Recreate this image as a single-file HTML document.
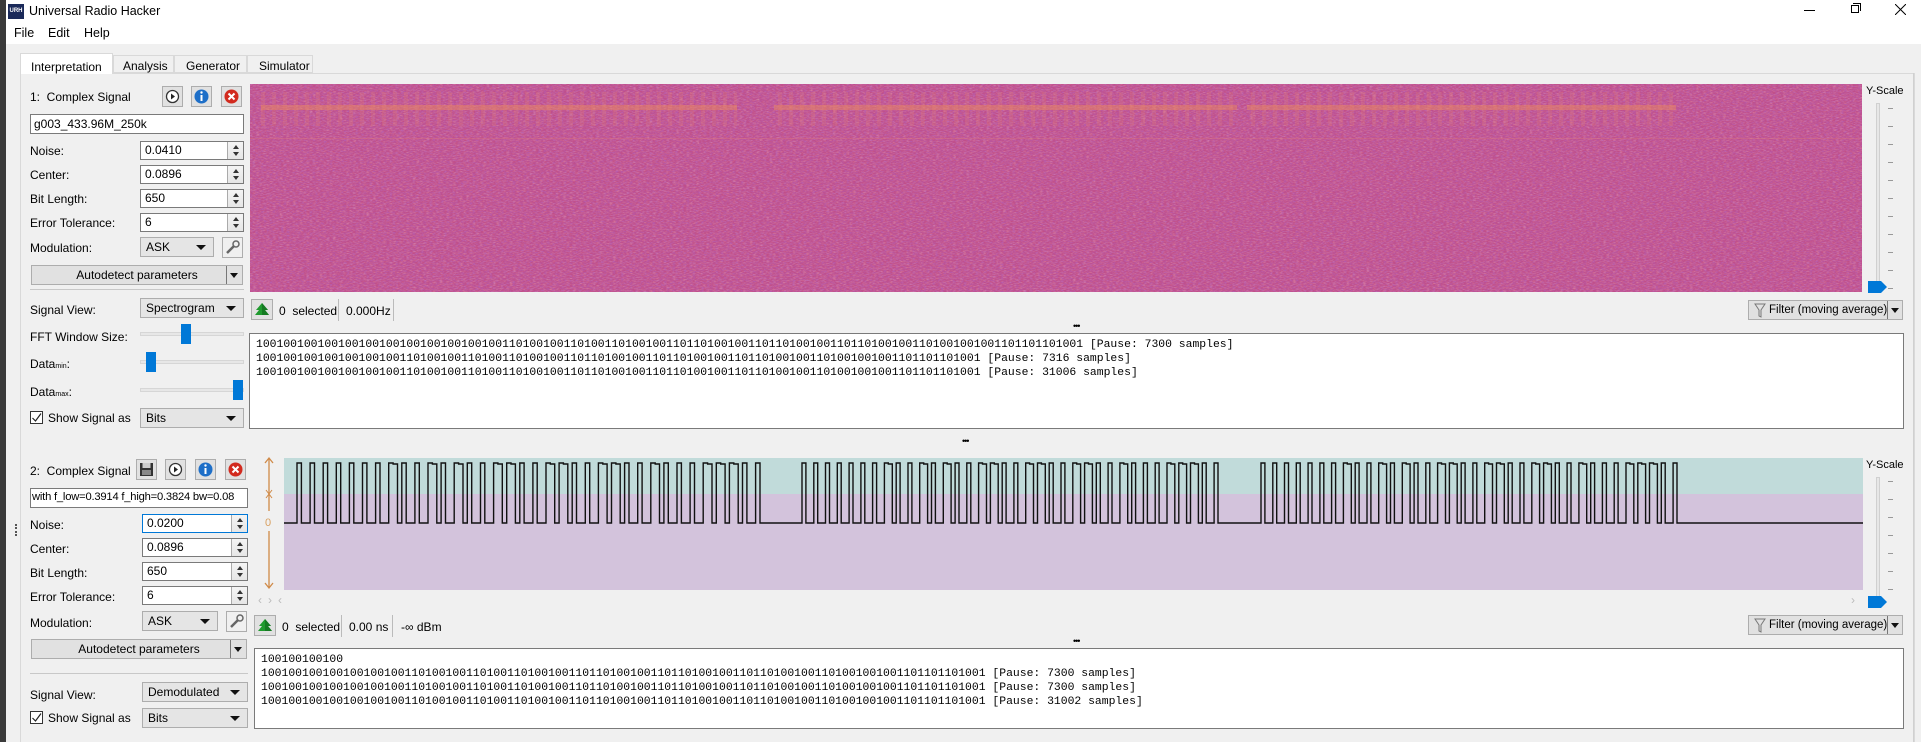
<!DOCTYPE html>
<html><head><meta charset="utf-8">
<style>
*{box-sizing:border-box;margin:0;padding:0}
body{width:1921px;height:742px;overflow:hidden;background:#f0f0f0;font-family:"Liberation Sans",sans-serif;font-size:12px;color:#000;position:relative}
.a{position:absolute}
.lbl{position:absolute;left:30px;font-size:12px;white-space:nowrap}
.spin{position:absolute;height:19px;background:#fff;border:1px solid #7a7a7a;font-size:12px;padding:1px 4px;line-height:15px}
.spin:after{content:"";position:absolute;right:0;top:0;width:15px;height:17px;border-left:1px solid #aaa;background:linear-gradient(#f4f4f4,#e6e6e6)}
.spin i{position:absolute;right:4px;width:0;height:0;border-left:3.5px solid transparent;border-right:3.5px solid transparent;z-index:2}
.spin i.u{top:3px;border-bottom:4px solid #333}
.spin i.d{top:10px;border-top:4px solid #333}
.combo{position:absolute;height:20px;background:#e5e5e5;border:1px solid #adadad;font-size:12px;padding:2px 5px;line-height:14px}
.combo:after{content:"";position:absolute;right:7px;top:7px;border-left:5px solid transparent;border-right:5px solid transparent;border-top:5px solid #111}
.btn{position:absolute;width:21px;height:21px;border:1px solid #adadad;background:#e1e1e1}
.auto{position:absolute;height:20px;background:#e1e1e1;border:1px solid #adadad;text-align:center;line-height:18px;font-size:12px}
.auto b{position:absolute;right:0;top:0;width:16px;height:18px;border-left:1px solid #777}
.auto b:after{content:"";position:absolute;left:3px;top:7px;border-left:4.5px solid transparent;border-right:4.5px solid transparent;border-top:5px solid #111}
.txt{position:absolute;background:#fff;border:1px solid #7a7a7a;font-family:"Liberation Mono",monospace;font-size:11.4px;line-height:14px;padding:4px 0 0 6px;white-space:pre;overflow:hidden}
.sep{position:absolute;height:1px;background:#c8c8c8}
.chk{position:absolute;width:13px;height:13px;border:1px solid #333;background:#fff}
.slider{position:absolute;height:4px;background:#e7e7e7;border:1px solid #d6d6d6}
.handle{position:absolute;width:10px;height:20px;background:#0078d7}
.filter{position:absolute;height:20px;border:1px solid #adadad;background:#e1e1e1;font-size:11.5px;line-height:18px;padding-left:20px;white-space:nowrap;overflow:hidden}
.filter b{position:absolute;right:0;top:0;width:15px;height:18px;border-left:1px solid #777;background:#e1e1e1}
.filter b:after{content:"";position:absolute;left:3px;top:7px;border-left:4.5px solid transparent;border-right:4.5px solid transparent;border-top:5px solid #111}
.ys{position:absolute;font-size:11px}
.vs{position:absolute;width:4px;background:#e7e7e7;border:1px solid #d0d0d0}
.ticks{position:absolute;width:5px;background:repeating-linear-gradient(#fff0 0,#fff0 17px,#999 17px,#999 18px)}
.grn{position:absolute;width:22px;height:21px;border:1px solid #adadad;background:#e1e1e1}
</style></head><body>
<div class="a" style="left:0;top:0;width:1921px;height:44px;background:#fff"></div>
<div class="a" style="left:0;top:0;width:6px;height:742px;background:#3a3a3a"></div>
<div class="a" style="left:8px;top:4px;width:16px;height:15px;background:#1b2a5a;color:#fff;font-size:6px;font-weight:bold;line-height:15px;text-align:center">URH</div>
<div class="a" style="left:29px;top:4px;font-size:12.5px">Universal Radio Hacker</div>
<div class="a" style="left:1804px;top:10px;width:11px;height:1px;background:#000"></div>
<div class="a" style="left:1851px;top:5px;width:8px;height:8px;border:1px solid #000"></div>
<div class="a" style="left:1853px;top:3px;width:8px;height:8px;border-top:1px solid #000;border-right:1px solid #000"></div>
<svg class="a" style="left:1895px;top:4px" width="11" height="11"><path d="M0 0L11 11M11 0L0 11" stroke="#000" stroke-width="1"/></svg>
<div class="a" style="left:14px;top:26px;font-size:12.5px">File</div>
<div class="a" style="left:48px;top:26px;font-size:12.5px">Edit</div>
<div class="a" style="left:84px;top:26px;font-size:12.5px">Help</div>
<div class="a" style="left:20px;top:73px;width:1895px;height:669px;border:1px solid #d9d9d9;border-bottom:none;background:#f0f0f0"></div>
<div class="a" style="left:20px;top:53px;width:93px;height:21px;background:#fff;border:1px solid #d9d9d9;border-bottom:none;padding:6px 0 0 10px">Interpretation</div>
<div class="a" style="left:113px;top:55px;width:61px;height:18px;background:#f0f0f0;border:1px solid #d9d9d9;padding:3px 0 0 9px">Analysis</div>
<div class="a" style="left:174px;top:55px;width:73px;height:18px;background:#f0f0f0;border:1px solid #d9d9d9;padding:3px 0 0 11px">Generator</div>
<div class="a" style="left:247px;top:55px;width:66px;height:18px;background:#f0f0f0;border:1px solid #d9d9d9;padding:3px 0 0 11px">Simulator</div>

<div class="lbl" style="top:90px">1:&nbsp; Complex Signal</div>
<div class="btn" style="left:162px;top:86px"><svg width="19" height="19"><circle cx="9.5" cy="9.5" r="6" fill="#fff" stroke="#333" stroke-width="1.3"/><path d="M8 6.5L12 9.5L8 12.5Z" fill="#222"/></svg></div>
<div class="btn" style="left:191px;top:86px"><svg width="19" height="19"><circle cx="9.5" cy="9.5" r="7" fill="#1e6fc8"/><rect x="8.5" y="8" width="2" height="6" fill="#fff"/><circle cx="9.5" cy="5.5" r="1.2" fill="#fff"/></svg></div>
<div class="btn" style="left:221px;top:86px"><svg width="19" height="19"><circle cx="9.5" cy="9.5" r="7" fill="#d22a1e"/><path d="M6.5 6.5L12.5 12.5M12.5 6.5L6.5 12.5" stroke="#fff" stroke-width="2"/></svg></div>
<div class="a" style="left:30px;top:114px;width:214px;height:20px;background:#fff;border:1px solid #7a7a7a;padding:2px 3px">g003_433.96M_250k</div>
<div class="lbl" style="top:144px">Noise:</div><div class="spin" style="left:140px;top:141px;width:104px">0.0410<i class="u"></i><i class="d"></i></div>
<div class="lbl" style="top:168px">Center:</div><div class="spin" style="left:140px;top:165px;width:104px">0.0896<i class="u"></i><i class="d"></i></div>
<div class="lbl" style="top:192px">Bit Length:</div><div class="spin" style="left:140px;top:189px;width:104px">650<i class="u"></i><i class="d"></i></div>
<div class="lbl" style="top:216px">Error Tolerance:</div><div class="spin" style="left:140px;top:213px;width:104px">6<i class="u"></i><i class="d"></i></div>
<div class="lbl" style="top:241px">Modulation:</div><div class="combo" style="left:140px;top:237px;width:74px">ASK</div>
<div class="btn" style="left:222px;top:237px;background:#f0f0f0"><svg width="19" height="19"><path d="M4 15L11 8" stroke="#666" stroke-width="2.5"/><circle cx="13" cy="6" r="3" fill="none" stroke="#666" stroke-width="1.5"/></svg></div>
<div class="auto" style="left:31px;top:265px;width:212px">Autodetect parameters<b></b></div>
<div class="sep" style="left:30px;top:289px;width:214px"></div>
<div class="lbl" style="top:303px">Signal View:</div><div class="combo" style="left:140px;top:298px;width:104px">Spectrogram</div>
<div class="lbl" style="top:330px">FFT Window Size:</div>
<div class="slider" style="left:140px;top:332px;width:104px"></div><div class="handle" style="left:181px;top:324px"></div>
<div class="lbl" style="top:357px">Data<span style="font-size:7px">min</span>:</div>
<div class="slider" style="left:140px;top:360px;width:104px"></div><div class="handle" style="left:146px;top:352px"></div>
<div class="lbl" style="top:385px">Data<span style="font-size:7px">max</span>:</div>
<div class="slider" style="left:140px;top:388px;width:104px"></div><div class="handle" style="left:233px;top:380px"></div>
<div class="chk" style="left:30px;top:411px"><svg width="11" height="11" style="position:absolute;left:0;top:0"><path d="M1.5 6L4.5 9L10 1.5" fill="none" stroke="#222" stroke-width="1.2"/></svg></div>
<div class="lbl" style="left:48px;top:411px">Show Signal as</div>
<div class="combo" style="left:140px;top:408px;width:104px">Bits</div>

<svg class="a" style="left:250px;top:84px" width="1612" height="208">
<defs>
<filter id="n" x="0" y="0" width="100%" height="100%"><feTurbulence type="fractalNoise" baseFrequency="0.35 1.2" numOctaves="2" seed="3"/><feColorMatrix values="0 0 0 0 0.45  0 0 0 0 0.12  0 0 0 0 0.5  1.8 0 0 0 -0.7"/></filter>
<filter id="n2" x="0" y="0" width="100%" height="100%"><feTurbulence type="fractalNoise" baseFrequency="0.3 1.1" numOctaves="2" seed="9"/><feColorMatrix values="0 0 0 0 0.95  0 0 0 0 0.45  0 0 0 0 0.45  1.6 0 0 0 -0.7"/></filter>
<pattern id="st" width="11" height="40" patternUnits="userSpaceOnUse"><rect width="4" height="40" fill="#e07a78" opacity="0.25"/></pattern>
</defs>
<rect width="1612" height="208" fill="#c04f8a"/>
<rect width="1612" height="208" filter="url(#n)"/>
<rect width="1612" height="208" filter="url(#n2)" opacity="0.6"/>
<rect x="11" y="8" width="476" height="34" fill="url(#st)"/>
<rect x="11" y="21" width="476" height="5" fill="#ea8c5c" opacity="0.45"/>
<rect x="524" y="8" width="463" height="34" fill="url(#st)"/>
<rect x="524" y="21" width="463" height="5" fill="#ea8c5c" opacity="0.45"/>
<rect x="997" y="8" width="429" height="34" fill="url(#st)"/>
<rect x="997" y="21" width="429" height="5" fill="#ea8c5c" opacity="0.45"/>
<rect x="0" y="54" width="1612" height="1" fill="#e07878" opacity="0.35"/>
</svg>
<div class="ys" style="left:1866px;top:85px">Y-Scale</div>
<div class="vs" style="left:1876px;top:103px;height:188px"></div>
<div class="ticks" style="left:1888px;top:91px;height:200px"></div>
<svg class="a" style="left:1868px;top:281px" width="20" height="12"><path d="M0 0H13L19 6L13 12H0Z" fill="#0078d7"/></svg>

<div class="grn" style="left:251px;top:299px"><svg width="20" height="19"><path d="M10 3L16 10H13L17 15H3L7 10H4Z" fill="#1f9a2e"/><path d="M10 3L16 10H13L17 15H10Z" fill="#157a22"/></svg></div>
<div class="a" style="left:279px;top:304px">0&nbsp; selected</div>
<div class="a" style="left:338px;top:299px;width:1px;height:22px;background:#bbb"></div>
<div class="a" style="left:346px;top:304px">0.000Hz</div>
<div class="a" style="left:393px;top:299px;width:1px;height:22px;background:#bbb"></div>
<div class="filter" style="left:1748px;top:300px;width:155px"><svg style="position:absolute;left:5px;top:2px" width="12" height="15"><path d="M1 1H11L7 7V14L5 13V7Z" fill="none" stroke="#777"/></svg>Filter (moving average)<b></b></div>
<div class="a" style="left:1073px;top:321px;font-size:9px;letter-spacing:-1px">•••</div>
<div class="txt" style="left:249px;top:333px;width:1655px;height:96px">1001001001001001001001001001001001001101001001101001101001001101101001001101101001001101101001001101001001001101101101001 [Pause: 7300 samples]
1001001001001001001001101001001101001101001001101101001001101101001001101101001001101001001001101101101001 [Pause: 7316 samples]
1001001001001001001001101001001101001101001001101101001001101101001001101101001001101001001001101101101001 [Pause: 31006 samples]</div>
<div class="a" style="left:962px;top:436px;font-size:9px;letter-spacing:-1px">•••</div>
<div class="a" style="left:15px;top:524px;width:2px;height:12px;border-left:2px dotted #555"></div>

<div class="lbl" style="top:464px">2:&nbsp; Complex Signal</div>
<div class="btn" style="left:136px;top:459px"><svg width="19" height="19"><rect x="3" y="3" width="13" height="13" fill="#333"/><rect x="5.5" y="3" width="8" height="5" fill="#ccc"/><rect x="5" y="10" width="9" height="5" fill="#888"/></svg></div>
<div class="btn" style="left:165px;top:459px"><svg width="19" height="19"><circle cx="9.5" cy="9.5" r="6" fill="#fff" stroke="#333" stroke-width="1.3"/><path d="M8 6.5L12 9.5L8 12.5Z" fill="#222"/></svg></div>
<div class="btn" style="left:195px;top:459px"><svg width="19" height="19"><circle cx="9.5" cy="9.5" r="7" fill="#1e6fc8"/><rect x="8.5" y="8" width="2" height="6" fill="#fff"/><circle cx="9.5" cy="5.5" r="1.2" fill="#fff"/></svg></div>
<div class="btn" style="left:225px;top:459px"><svg width="19" height="19"><circle cx="9.5" cy="9.5" r="7" fill="#d22a1e"/><path d="M6.5 6.5L12.5 12.5M12.5 6.5L6.5 12.5" stroke="#fff" stroke-width="2"/></svg></div>
<div class="a" style="left:30px;top:488px;width:218px;height:20px;background:#fff;border:1px solid #7a7a7a;padding:2px 1px;overflow:hidden;white-space:nowrap;font-size:11.2px;letter-spacing:-0.2px">with f_low=0.3914 f_high=0.3824 bw=0.08</div>
<div class="lbl" style="top:518px">Noise:</div><div class="spin" style="left:142px;top:514px;width:106px;border-color:#0078d7">0.0200<i class="u"></i><i class="d"></i></div>
<div class="lbl" style="top:542px">Center:</div><div class="spin" style="left:142px;top:538px;width:106px">0.0896<i class="u"></i><i class="d"></i></div>
<div class="lbl" style="top:566px">Bit Length:</div><div class="spin" style="left:142px;top:562px;width:106px">650<i class="u"></i><i class="d"></i></div>
<div class="lbl" style="top:590px">Error Tolerance:</div><div class="spin" style="left:142px;top:586px;width:106px">6<i class="u"></i><i class="d"></i></div>
<div class="lbl" style="top:616px">Modulation:</div><div class="combo" style="left:142px;top:611px;width:76px">ASK</div>
<div class="btn" style="left:226px;top:611px;background:#f0f0f0"><svg width="19" height="19"><path d="M4 15L11 8" stroke="#666" stroke-width="2.5"/><circle cx="13" cy="6" r="3" fill="none" stroke="#666" stroke-width="1.5"/></svg></div>
<div class="auto" style="left:31px;top:639px;width:216px">Autodetect parameters<b></b></div>
<div class="sep" style="left:30px;top:673px;width:218px"></div>
<div class="lbl" style="top:688px">Signal View:</div><div class="combo" style="left:142px;top:682px;width:106px">Demodulated</div>
<div class="chk" style="left:30px;top:711px"><svg width="11" height="11" style="position:absolute;left:0;top:0"><path d="M1.5 6L4.5 9L10 1.5" fill="none" stroke="#222" stroke-width="1.2"/></svg></div>
<div class="lbl" style="left:48px;top:711px">Show Signal as</div>
<div class="combo" style="left:142px;top:708px;width:106px">Bits</div>

<svg class="a" style="left:262px;top:456px" width="20" height="136"><path d="M7 3V55M7 75V131" stroke="#d08a48" stroke-width="1.3"/><path d="M3 7L7 2L11 7M3 127L7 132L11 127" fill="none" stroke="#d08a48" stroke-width="1.3"/><path d="M4 34L10 42M10 34L4 42" stroke="#d08a48"/><text x="3" y="70" font-size="11" fill="#d8a060" font-family="Liberation Sans">0</text></svg>
<svg class="a" style="left:284px;top:458px" width="1579" height="132">
<rect width="1579" height="36" fill="#c1dbda"/>
<rect y="36" width="1579" height="96" fill="#d3c3dc"/>
<path id="wp" d="" fill="none" stroke="#111" stroke-width="1.4"/>
</svg>
<div class="a" style="left:258px;top:593px;color:#bbb;font-size:12px;letter-spacing:6px">‹›‹</div>
<div class="a" style="left:1851px;top:593px;color:#bbb;font-size:12px">›</div>
<div class="ys" style="left:1866px;top:459px">Y-Scale</div>
<div class="vs" style="left:1876px;top:477px;height:122px"></div>
<div class="ticks" style="left:1888px;top:464px;height:135px"></div>
<svg class="a" style="left:1868px;top:596px" width="20" height="12"><path d="M0 0H13L19 6L13 12H0Z" fill="#0078d7"/></svg>

<div class="grn" style="left:254px;top:615px"><svg width="20" height="19"><path d="M10 3L16 10H13L17 15H3L7 10H4Z" fill="#1f9a2e"/><path d="M10 3L16 10H13L17 15H10Z" fill="#157a22"/></svg></div>
<div class="a" style="left:282px;top:620px">0&nbsp; selected</div>
<div class="a" style="left:341px;top:615px;width:1px;height:22px;background:#bbb"></div>
<div class="a" style="left:349px;top:620px">0.00 ns</div>
<div class="a" style="left:392px;top:615px;width:1px;height:22px;background:#bbb"></div>
<div class="a" style="left:401px;top:620px">-∞ dBm</div>
<div class="filter" style="left:1748px;top:615px;width:155px"><svg style="position:absolute;left:5px;top:2px" width="12" height="15"><path d="M1 1H11L7 7V14L5 13V7Z" fill="none" stroke="#777"/></svg>Filter (moving average)<b></b></div>
<div class="a" style="left:1073px;top:636px;font-size:9px;letter-spacing:-1px">•••</div>
<div class="txt" style="left:254px;top:648px;width:1650px;height:81px">100100100100
1001001001001001001001101001001101001101001001101101001001101101001001101101001001101001001001101101101001 [Pause: 7300 samples]
1001001001001001001001101001001101001101001001101101001001101101001001101101001001101001001001101101101001 [Pause: 7300 samples]
1001001001001001001001101001001101001101001001101101001001101101001001101101001001101001001001101101101001 [Pause: 31002 samples]</div>
<div class="a" style="left:1913px;top:73px;width:1px;height:669px;background:#d0d0d0"></div>
<script>
(function(){
var b="1001001001001001001001101001001101001101001001101101001001101101001001101101001001101001001001101101101001";
var bursts=[[13,476],[518,934],[977,1393]];
var hi=5,lo=65,d="M0 "+lo;
bursts.forEach(function(r){
 var w=(r[1]-r[0])/b.length;
 d+=" L"+r[0]+" "+lo;
 for(var i=0;i<b.length;i++){
  var x=r[0]+i*w, y=(b[i]=="1")?hi+((i*7)%3):lo;
  var py=(i==0)?lo:((b[i-1]=="1")?hi:lo);
  if(y!=py){d+=" L"+x.toFixed(1)+" "+y;}
  d+=" L"+(x+w).toFixed(1)+" "+y;
 }
 d+=" L"+r[1]+" "+lo;
});
d+=" L1579 "+lo;
document.getElementById("wp").setAttribute("d",d);
})();
</script>
</body></html>
